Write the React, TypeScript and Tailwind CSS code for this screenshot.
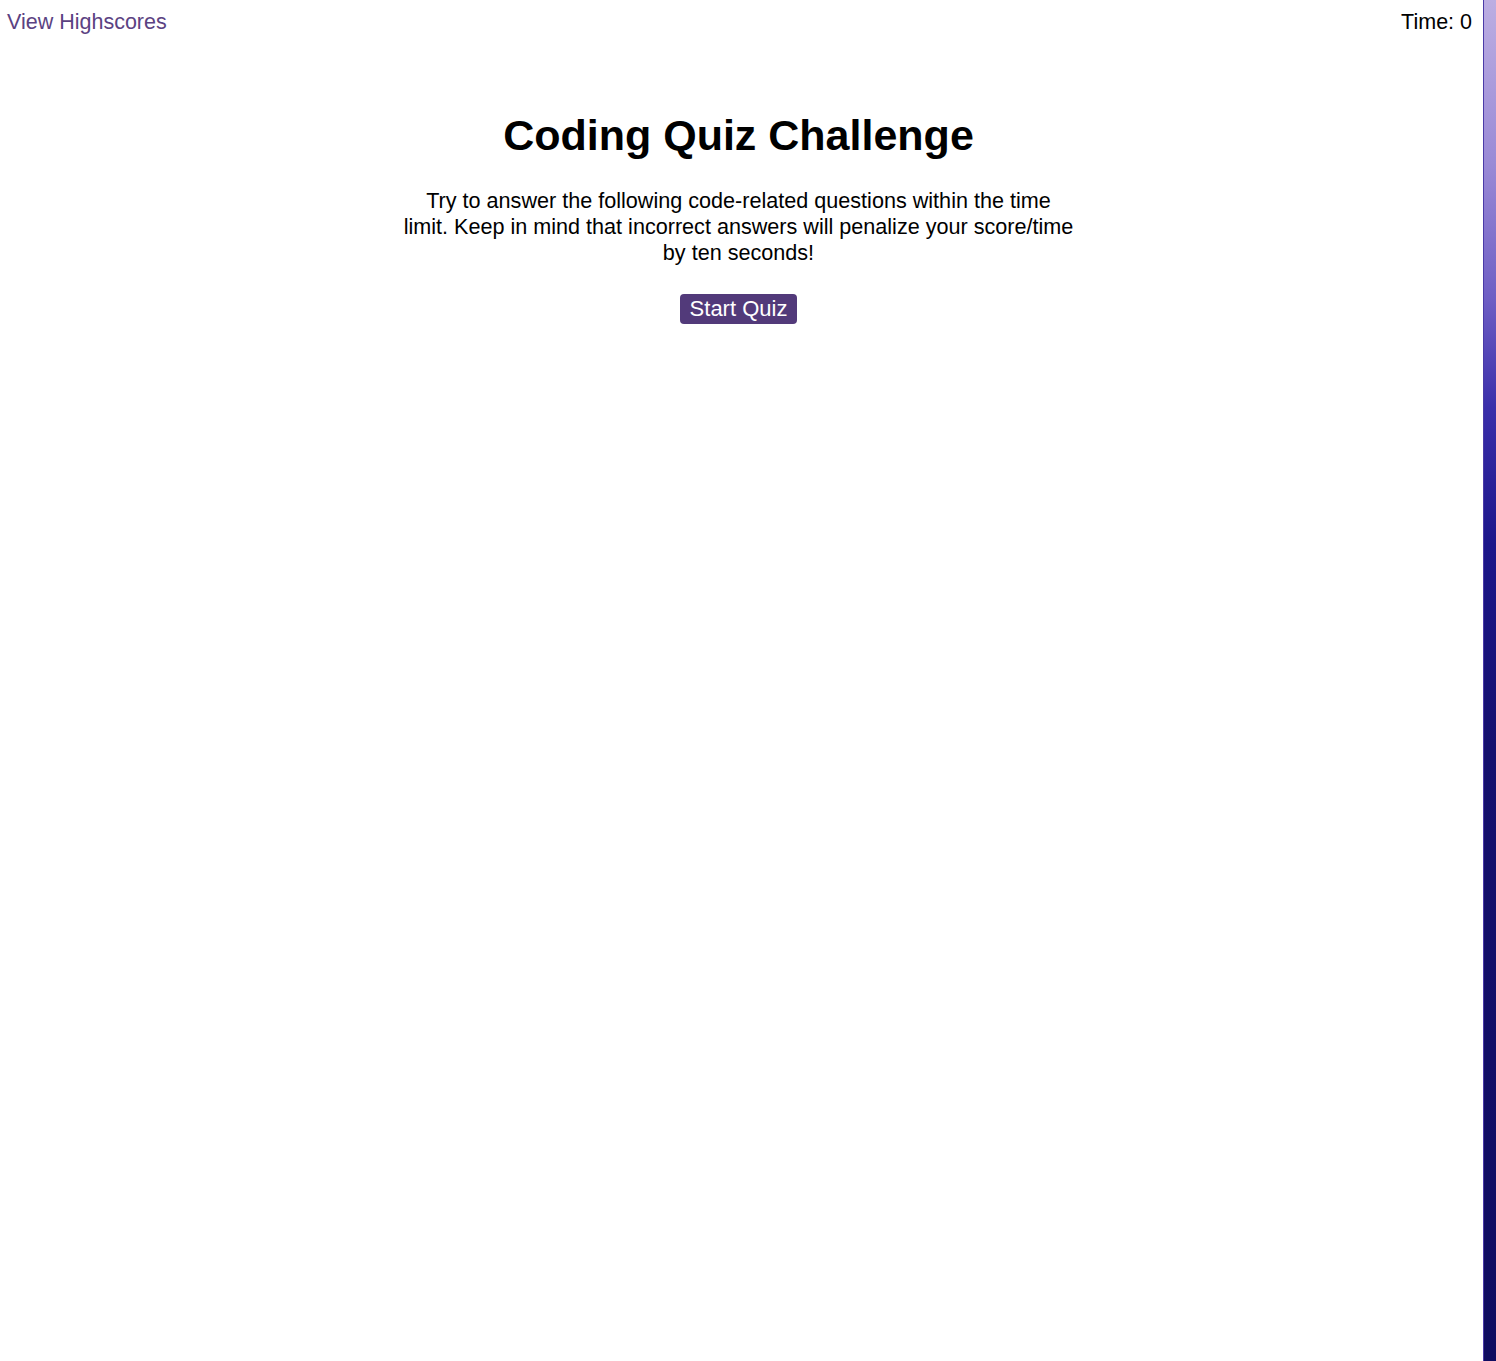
import React from "react";

export default function App() {
  return (
    <div className="flex min-h-[1361px] w-full bg-white" style={{ fontFamily: '"Liberation Sans", Arial, sans-serif' }}>
      <div className="flex-1 flex flex-col">
        <header className="flex justify-between items-start pl-[7px] pr-[11px] pt-[10px] text-[21.5px] leading-[24px]">
          <a className="text-[#5b4282] cursor-pointer">View Highscores</a>
          <span className="text-black">Time: 0</span>
        </header>
        <main className="flex flex-col items-center pr-[6px]">
          <h1 className="mt-[76px] text-[43px] leading-[50px] font-bold text-black">Coding Quiz Challenge</h1>
          <p className="mt-[28px] w-[700px] text-center text-[21.6px] leading-[26px] text-black whitespace-nowrap">
            Try to answer the following code-related questions within the time
            <br />
            limit. Keep in mind that incorrect answers will penalize your score/time
            <br />
            by ten seconds!
          </p>
          <button className="mt-[28px] h-[30px] px-[10px] rounded-[4px] bg-[#523a7a] text-white text-[22px] leading-[30px]">
            Start Quiz
          </button>
        </main>
      </div>
      <div className="w-[13px] border-l border-[#4a3aa8] bg-[linear-gradient(to_bottom,#bcaee2_0%,#9a8ad6_12%,#6e5ec4_22%,#3a2eaa_30%,#1c168a_40%,#15106e_55%,#0f0c60_100%)]" />
    </div>
  );
}
